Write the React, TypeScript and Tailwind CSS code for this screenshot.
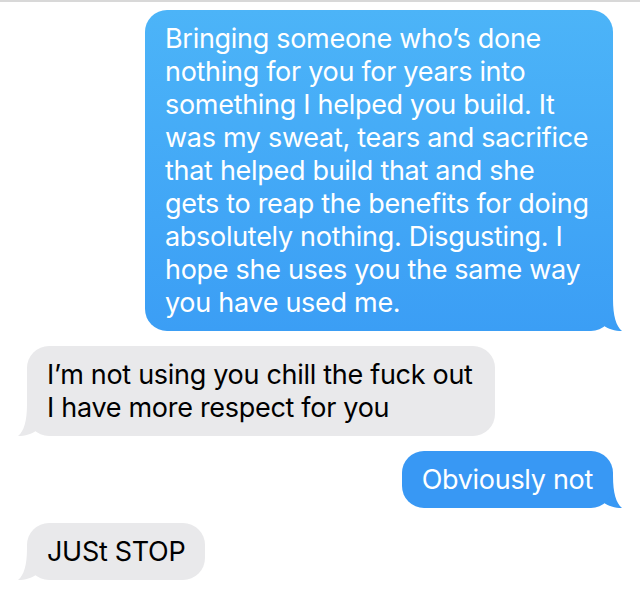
import React from "react";

// ---------- Bubble tail ----------
function Tail({ color, side }: { color: string; side: "left" | "right" }) {
  const pos = side === "right" ? "-right-[11px]" : "-left-[11px] -scale-x-100";
  return (
    <svg className={`absolute bottom-0 ${pos}`} width="26" height="34" viewBox="0 0 26 34">
      <path d="M15 2 C15 19 18 29 24 34 C17 34 10 32 5 28 L2 4 Z" fill={color} />
    </svg>
  );
}

const lines = [
  "Bringing someone who’s done",
  "nothing for you for years into",
  "something I helped you build. It",
  "was my sweat, tears and sacrifice",
  "that helped build that and she",
  "gets to reap the benefits for doing",
  "absolutely nothing. Disgusting. I",
  "hope she uses you the same way",
  "you have used me.",
];

export default function App() {
  return (
    <div
      className="w-[640px] h-[594px] bg-white overflow-hidden text-[27px] leading-[33px] tracking-[-0.011em]"
      style={{ fontFamily: "Inter, 'Noto Sans', sans-serif" }}
    >
      <div className="h-[2px] bg-[#d8d8d8]" />
      <div className="flex flex-col gap-[15px] px-[27px] pt-[8px]">
        {/* sent long */}
        <div className="self-end relative">
          <div className="relative z-10 w-[468px] rounded-[22px] bg-gradient-to-b from-[#4cb4f8] to-[#3b9ef5] text-white px-[20px] py-[12px] whitespace-nowrap">
            {lines.map((l, i) => (
              <div key={i}>{l}</div>
            ))}
          </div>
          <Tail color="#3b9ef5" side="right" />
        </div>

        {/* received */}
        <div className="self-start relative">
          <div className="relative z-10 w-[468px] rounded-[22px] bg-[#e9e9eb] text-black px-[20px] py-[12px] whitespace-nowrap">
            <div>I’m not using you chill the fuck out</div>
            <div>I have more respect for you</div>
          </div>
          <Tail color="#e9e9eb" side="left" />
        </div>

        {/* sent short */}
        <div className="self-end relative">
          <div className="relative z-10 rounded-[22px] bg-[#3898f4] text-white px-[20px] py-[12px] whitespace-nowrap">
            Obviously not
          </div>
          <Tail color="#3898f4" side="right" />
        </div>

        {/* received short */}
        <div className="self-start relative">
          <div className="relative z-10 rounded-[22px] bg-[#e9e9eb] text-black px-[20px] py-[12px] whitespace-nowrap">
            JUSt STOP
          </div>
          <Tail color="#e9e9eb" side="left" />
        </div>
      </div>
    </div>
  );
}
